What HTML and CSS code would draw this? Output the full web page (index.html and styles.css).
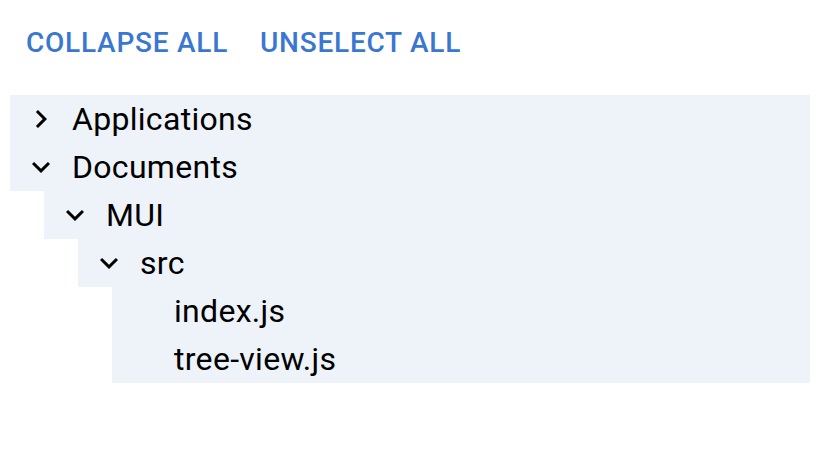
FILE: index.html
```html
<!DOCTYPE html>
<html lang="en">
<head>
    <meta charset="UTF-8">
    <meta name="viewport" content="width=device-width, initial-scale=1.0">
    <title>Tree View</title>
    <link rel="stylesheet" href="styles.css">
</head>
<body>
    <div class="demo">
        <div class="actions">
            <button class="btn-text">Collapse all</button>
            <button class="btn-text">Unselect all</button>
        </div>

        <ul class="tree">
            <li class="tree-item">
                <div class="tree-content selected">
                    <div class="icon-container">
                        <svg viewBox="0 0 24 24"><path d="M10 6 8.59 7.41 13.17 12l-4.58 4.59L10 18l6-6z"/></svg>
                    </div>
                    <div class="tree-label">Applications</div>
                </div>
            </li>
            <li class="tree-item">
                <div class="tree-content selected">
                    <div class="icon-container">
                        <svg viewBox="0 0 24 24"><path d="M16.59 8.59 12 13.17 7.41 8.59 6 10l6 6 6-6z"/></svg>
                    </div>
                    <div class="tree-label">Documents</div>
                </div>
                <ul class="tree-group">
                    <li class="tree-item">
                        <div class="tree-content selected">
                            <div class="icon-container">
                                <svg viewBox="0 0 24 24"><path d="M16.59 8.59 12 13.17 7.41 8.59 6 10l6 6 6-6z"/></svg>
                            </div>
                            <div class="tree-label">MUI</div>
                        </div>
                        <ul class="tree-group">
                            <li class="tree-item">
                                <div class="tree-content selected">
                                    <div class="icon-container">
                                        <svg viewBox="0 0 24 24"><path d="M16.59 8.59 12 13.17 7.41 8.59 6 10l6 6 6-6z"/></svg>
                                    </div>
                                    <div class="tree-label">src</div>
                                </div>
                                <ul class="tree-group">
                                    <li class="tree-item">
                                        <div class="tree-content selected">
                                            <div class="icon-container"></div>
                                            <div class="tree-label">index.js</div>
                                        </div>
                                    </li>
                                    <li class="tree-item">
                                        <div class="tree-content selected">
                                            <div class="icon-container"></div>
                                            <div class="tree-label">tree-view.js</div>
                                        </div>
                                    </li>
                                </ul>
                            </li>
                        </ul>
                    </li>
                </ul>
            </li>
        </ul>
    </div>
</body>
</html>
```

FILE: styles.css
```css
body {
    margin: 0;
    background: #ffffff;
    font-family: Roboto, "Liberation Sans", sans-serif;
    color: #000000;
}

.demo {
    padding: 6px 20px 0 10px;
}

.actions {
    display: flex;
    margin-bottom: 16px;
}

.btn-text {
    background: none;
    border: none;
    padding: 12px 16px;
    min-width: 128px;
    font-family: Roboto, "Liberation Sans", sans-serif;
    font-size: 28px;
    font-weight: 500;
    line-height: 1.75;
    letter-spacing: 0.75px;
    text-transform: uppercase;
    color: #3a77d0;
    cursor: pointer;
}

.tree,
.tree-group {
    list-style: none;
    margin: 0;
    padding: 0;
}

.tree-group {
    margin-left: 34px;
}

.tree-content {
    display: flex;
    align-items: center;
    padding: 0 16px;
    height: 48px;
}

.tree-content.selected {
    background: #eef3fa;
}

.icon-container {
    width: 30px;
    margin-right: 8px;
    flex-shrink: 0;
    display: flex;
    justify-content: center;
}

.icon-container svg {
    width: 36px;
    height: 36px;
    flex-shrink: 0;
    fill: #000000;
}

.tree-label {
    padding-left: 8px;
    font-size: 32px;
    line-height: 1.5;
    letter-spacing: 0.3px;
}
```
